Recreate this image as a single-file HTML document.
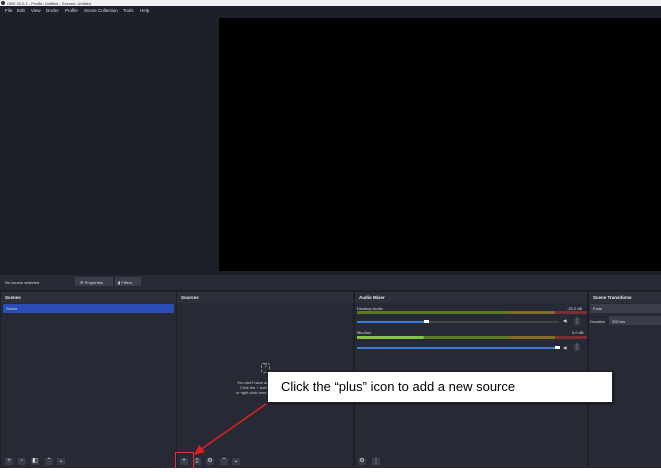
<!DOCTYPE html>
<html><head><style>
*{margin:0;padding:0;box-sizing:border-box}
body{width:661px;height:472px;background:#1d1f29;font-family:"Liberation Sans",sans-serif;position:relative;overflow:hidden;color:#ddd}
.a{position:absolute}
.t{font-size:4px;color:#ddd;white-space:nowrap}
.m{position:absolute;top:8px;font-size:4.5px;color:#ddd;white-space:nowrap}
.hd{background:#2d303b;height:11px;font-size:4.5px;font-weight:bold;padding:3px 4px;color:#eee}
.pb{background:#272a35}
.btn{position:absolute;width:8px;height:7px;background:#3a3e4b;border-radius:1px;font-size:6px;line-height:7px;text-align:center;color:#ddd}
</style></head><body>
<div class="a" style="left:0;top:0;width:661px;height:6px;background:#f2f2f2"></div>
<div class="a t" style="left:7px;top:0.5px;color:#333;font-size:4px">OBS 30.0.2 - Profile: Untitled - Scenes: Untitled</div>
<div class="a" style="left:1px;top:1px;width:4px;height:4px;border-radius:50%;background:#333"></div>
<div class="a" style="left:0;top:6px;width:661px;height:9px;background:#1d1f29"></div>
<div class="m" style="left:5px">File</div>
<div class="m" style="left:17px">Edit</div>
<div class="m" style="left:31px">View</div>
<div class="m" style="left:46px">Docks</div>
<div class="m" style="left:65px">Profile</div>
<div class="m" style="left:84px">Scene Collection</div>
<div class="m" style="left:123px">Tools</div>
<div class="m" style="left:140px">Help</div>
<div class="a" style="left:219px;top:18px;width:442px;height:253px;background:#000"></div>
<div class="a" style="left:0;top:275px;width:661px;height:15px;background:#272a35"></div>
<div class="a t" style="left:5px;top:280px">No source selected</div>
<div class="a" style="left:75px;top:277px;width:38px;height:9px;background:#3a3e4b;border-radius:1px"></div>
<div class="a t" style="left:80px;top:279.5px">⚙ Properties</div>
<div class="a" style="left:115px;top:277px;width:26px;height:9px;background:#3a3e4b;border-radius:1px"></div>
<div class="a t" style="left:118px;top:279.5px">▮ Filters</div>

<div class="a pb" style="left:1px;top:292px;width:175px;height:176px"></div>
<div class="a hd" style="left:1px;top:292px;width:175px">Scenes</div>
<div class="a" style="left:3px;top:304px;width:171px;height:9px;background:#284cb8;border-radius:1px"></div>
<div class="a t" style="left:6px;top:306px">Scene</div>

<div class="a pb" style="left:177px;top:292px;width:176px;height:176px"></div>
<div class="a hd" style="left:177px;top:292px;width:176px">Sources</div>
<div class="a" style="left:261px;top:363px;width:9px;height:10px;border:1px dashed #888;border-radius:2px;font-size:6px;text-align:center;color:#aaa">?</div>
<div class="a t" style="left:236px;top:380px;color:#ccc;text-align:center;line-height:5px">You don't have any sources.<br>Click the + button below,<br>or right click here to add one.</div>

<div class="a pb" style="left:355px;top:292px;width:232px;height:176px"></div>
<div class="a hd" style="left:355px;top:292px;width:232px">Audio Mixer</div>
<div class="a t" style="left:357px;top:306px">Desktop Audio</div>
<div class="a t" style="left:567px;top:306px">-33.2 dB</div>
<div class="a" style="left:357px;top:311px;width:230px;height:3px;background:linear-gradient(90deg,#5b7a25 0 66%,#7f6d2a 66% 86%,#7a2f33 86%)"></div>
<div class="a" style="left:357px;top:321px;width:72px;height:2px;background:#3b7bd4"></div>
<div class="a" style="left:424px;top:320px;width:5px;height:3px;background:#fff"></div>
<div class="a" style="left:429px;top:321px;width:130px;height:1.5px;background:#444"></div>
<div class="a t" style="left:563px;top:318px">◀)</div>
<div class="a btn" style="left:574px;top:318px;width:6px">⋮</div>
<div class="a t" style="left:357px;top:330px">Mic/Aux</div>
<div class="a t" style="left:572px;top:330px">0.0 dB</div>
<div class="a" style="left:357px;top:336px;width:230px;height:3px;background:linear-gradient(90deg,#8bc34a 0 29%,#5b7a25 29% 66%,#7f6d2a 66% 86%,#7a2f33 86%)"></div>
<div class="a" style="left:357px;top:347px;width:200px;height:2px;background:#3b7bd4"></div>
<div class="a" style="left:555px;top:346px;width:5px;height:3px;background:#fff"></div>
<div class="a t" style="left:563px;top:345px">◀)</div>
<div class="a btn" style="left:574px;top:344px;width:6px">⋮</div>

<div class="a pb" style="left:589px;top:292px;width:72px;height:176px"></div>
<div class="a hd" style="left:589px;top:292px;width:72px">Scene Transitions</div>
<div class="a" style="left:590px;top:304px;width:71px;height:9px;background:#3a3e4b"></div>
<div class="a t" style="left:593px;top:306px">Fade</div>
<div class="a t" style="left:590px;top:319px">Duration</div>
<div class="a" style="left:609px;top:316px;width:52px;height:9px;background:#3a3e4b"></div>
<div class="a t" style="left:612px;top:318.5px">300 ms</div>

<div class="btn" style="left:5px;top:458px">+</div>
<div class="btn" style="left:18px;top:458px">▫</div>
<div class="btn" style="left:31px;top:458px">◧</div>
<div class="btn" style="left:45px;top:458px">⌃</div>
<div class="btn" style="left:57px;top:458px">⌄</div>
<div class="btn" style="left:180px;top:458px">+</div>
<div class="btn" style="left:193px;top:458px">▯</div>
<div class="btn" style="left:206px;top:458px">⚙</div>
<div class="btn" style="left:220px;top:458px">⌃</div>
<div class="btn" style="left:232px;top:458px">⌄</div>
<div class="btn" style="left:358px;top:458px">⚙</div>
<div class="btn" style="left:372px;top:458px">⋮</div>
<div class="a" style="left:175px;top:452px;width:19px;height:17px;border:1.5px solid #e53030"></div>

<div class="a" style="left:0;top:468px;width:661px;height:4px;background:#fff"></div>

<svg class="a" style="left:190px;top:400px" width="80" height="60"><line x1="76" y1="4" x2="10" y2="50" stroke="#e02020" stroke-width="1.5"/><polygon points="4,55 9,45 15,52" fill="#e02020"/></svg>
<div class="a" style="left:267px;top:371px;width:346px;height:32px;background:#fff;border:1px solid #222;box-shadow:1px 1px 2px rgba(0,0,0,.5)"></div>
<div class="a" style="left:281px;top:379px;font-size:13px;color:#000;white-space:nowrap">Click the “plus” icon to add a new source</div>
</body></html>
